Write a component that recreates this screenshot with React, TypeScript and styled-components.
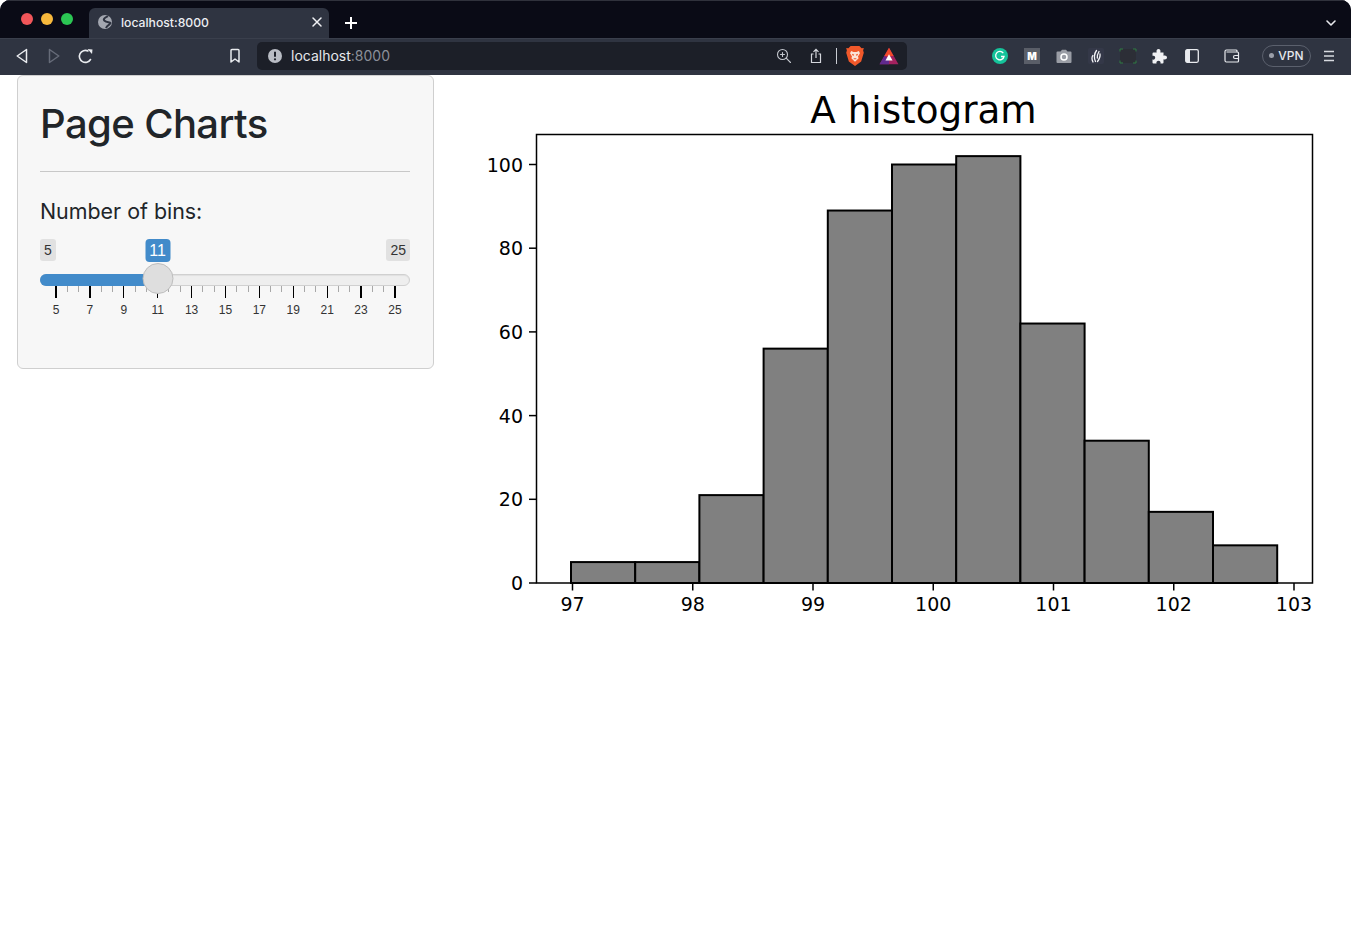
import React from 'react';
import styled, { createGlobalStyle } from 'styled-components';

const GlobalStyle = createGlobalStyle`
	html, body {
		margin: 0;
		padding: 0;
		background: #ffffff;
		font-family: Inter, 'Liberation Sans', sans-serif;
	}
	* {
		box-sizing: border-box;
	}
`;

const Header = styled.header`
	height: 75px;
	background: #2f3441;
	border-radius: 10px 10px 0 0;
	overflow: hidden;
`;

const TabStrip = styled.div`
	height: 38px;
	padding: 0 14px 0 21px;
	display: flex;
	align-items: flex-end;
	background: #0a0b16;
	border-top: 1px solid #30323c;
`;

const Lights = styled.div`
	display: flex;
	gap: 8px;
	margin-bottom: 13px;
	margin-right: 16px;
`;

const Light = styled.span<{ $color: string }>`
	width: 12px;
	height: 12px;
	border-radius: 50%;
	background: ${(p) => p.$color};
`;

const Tab = styled.div`
	width: 240px;
	height: 30px;
	padding: 0 4px 2px 8px;
	display: flex;
	align-items: center;
	gap: 8px;
	background: #2f3441;
	border-radius: 6px 6px 0 0;
	color: #eceef2;
	font-size: 12.2px;
	font-weight: 500;
`;

const TabTitle = styled.span`
	flex: 1;
`;

const NewTab = styled.div`
	width: 44px;
	height: 30px;
	display: flex;
	align-items: center;
	justify-content: center;
`;

const StripEnd = styled.div`
	margin-left: auto;
	height: 30px;
	display: flex;
	align-items: center;
`;

const Toolbar = styled.div`
	height: 37px;
	padding: 0 0 2px 6px;
	display: flex;
	align-items: center;
	box-shadow: inset 0 1px 0 #3a3f4c;
`;

const Slot = styled.div<{ $width?: number; $left?: number }>`
	width: ${(p) => p.$width ?? 32}px;
	height: 28px;
	margin-left: ${(p) => p.$left ?? 0}px;
	flex: none;
	display: flex;
	align-items: center;
	justify-content: center;
	color: #e9ebef;
`;

const AddressBar = styled.div`
	width: 650px;
	height: 28px;
	margin-left: 6px;
	padding: 0 1px 0 10px;
	display: flex;
	align-items: center;
	gap: 8px;
	flex: none;
	background: #1c1f28;
	border-radius: 5px;
	font-size: 14px;
	color: #e6e8ec;
`;

const Port = styled.span`
	color: #8b8f99;
`;

const AddressUrl = styled.span`
	flex: 1;
`;

const AddressActions = styled.div`
	display: flex;
	align-items: center;
`;

const Separator = styled.span`
	width: 1px;
	height: 16px;
	margin: 0 1px 0 4px;
	background: #c9ccd3;
`;

const Vpn = styled.div`
	width: 49px;
	height: 22px;
	margin-left: 14px;
	display: flex;
	align-items: center;
	justify-content: center;
	gap: 4px;
	flex: none;
	border: 1px solid #5b606d;
	border-radius: 11px;
	color: #e6e8ec;
	font-size: 12px;
	font-weight: 500;
`;

const VpnDot = styled.span`
	width: 5px;
	height: 5px;
	border-radius: 50%;
	background: #9a9ea8;
`;

const Main = styled.main`
	display: flex;
	align-items: flex-start;
`;

const Sidebar = styled.aside`
	width: 450px;
	padding: 0 16px 0 17px;
	flex: none;
`;

const Card = styled.section`
	height: 294px;
	padding: 0 23px 0 22px;
	background: #f7f7f7;
	border: 1px solid #cfcfcf;
	border-radius: 6px;
	color: #212529;
`;

const Title = styled.h2`
	margin: 0;
	padding-top: 23px;
	height: 96px;
	font-size: 40px;
	line-height: 50px;
	font-weight: 500;
	letter-spacing: -0.6px;
	border-bottom: 1px solid #c8c8c8;
`;

const BinsLabel = styled.label`
	display: block;
	margin-top: 26px;
	font-size: 21.4px;
	line-height: 26px;
`;

const Slider = styled.div`
	position: relative;
	margin-top: 15px;
	font-family: 'Liberation Sans', Arial, sans-serif;
`;

const Limits = styled.div`
	height: 22px;
	display: flex;
	justify-content: space-between;
	font-size: 14px;
`;

const Limit = styled.span`
	padding: 0 4px;
	min-width: 16px;
	display: flex;
	align-items: center;
	justify-content: center;
	background: #e1e1e1;
	border-radius: 3px;
	color: #333333;
`;

const ValueBadge = styled.span`
	position: absolute;
	top: 0;
	width: 25px;
	height: 23px;
	transform: translateX(-50%);
	display: flex;
	align-items: center;
	justify-content: center;
	background: #428bca;
	border-radius: 4px;
	color: #ffffff;
	font-size: 16px;
`;

const Track = styled.div`
	height: 12px;
	margin-top: 13px;
	background: #eeeeee;
	border: 1px solid #d0d0d0;
	border-radius: 6px;
	box-shadow: inset 0 1px 1px rgba(0, 0, 0, 0.06);
`;

const TrackFill = styled.div`
	height: 12px;
	margin: -1px 0 0 -1px;
	background: #428bca;
	border-radius: 6px 0 0 6px;
`;

const Thumb = styled.span`
	position: absolute;
	top: 24px;
	width: 31px;
	height: 31px;
	transform: translateX(-50%);
	background: #dedede;
	border: 1px solid #bdbdbd;
	border-radius: 50%;
`;

const Ticks = styled.div`
	height: 12px;
	margin: 0 14.5px 0 15.5px;
	display: flex;
	justify-content: space-between;
	align-items: flex-start;
`;

const Tick = styled.span<{ $major: boolean; $heavy: boolean }>`
	width: ${(p) => (p.$heavy ? 2 : 1)}px;
	margin: 0 ${(p) => (p.$heavy ? -0.5 : 0)}px;
	height: ${(p) => (p.$major ? 12 : 6)}px;
	background: ${(p) => (p.$major ? '#000000' : '#a8a8a8')};
`;

const TickLabels = styled.div`
	margin: 5px 15px 0 16px;
	display: flex;
	justify-content: space-between;
	font-size: 12px;
	line-height: 14px;
	color: #333333;
`;

const TickLabel = styled.span`
	width: 0;
	display: flex;
	justify-content: center;
`;

const ChartSvg = styled.svg`
	display: block;
	flex: none;
	width: 901px;
	height: 600px;

	text {
		font-family: 'DejaVu Sans', sans-serif;
		fill: #000000;
	}
`;

const counts = [5, 5, 21, 56, 89, 100, 102, 62, 34, 17, 9];
const binStart = 571;
const binWidth = 64.2;
const baseY = 583;
const unitY = 4.185;
const xTicks = [97, 98, 99, 100, 101, 102, 103];
const yTicks = [0, 20, 40, 60, 80, 100];
const xPos = (v: number) => 572.5 + (v - 97) * 120.25;

const Histogram = () => (
	<ChartSvg viewBox='450 75 901 600'>
		<text x='923.5' y='123' fontSize='37.3' textAnchor='middle'>
			A histogram
		</text>
		{counts.map((c, i) => (
			<rect
				key={i}
				x={binStart + i * binWidth}
				y={baseY - c * unitY}
				width={binWidth}
				height={c * unitY}
				fill='#808080'
				stroke='#000000'
				strokeWidth='2'
			/>
		))}
		<rect x='536.5' y='134.5' width='776' height='448.5' fill='none' stroke='#000000' strokeWidth='1.5' />
		{yTicks.map((t) => (
			<g key={t}>
				<line x1='529' x2='536.5' y1={baseY - t * unitY} y2={baseY - t * unitY} stroke='#000000' strokeWidth='1.5' />
				<text x='523' y={baseY - t * unitY + 7} fontSize='19' textAnchor='end'>
					{t}
				</text>
			</g>
		))}
		{xTicks.map((t) => (
			<g key={t}>
				<line x1={xPos(t)} x2={xPos(t)} y1='583' y2='590.5' stroke='#000000' strokeWidth='1.5' />
				<text x={xPos(t)} y='611' fontSize='19' textAnchor='middle'>
					{t}
				</text>
			</g>
		))}
	</ChartSvg>
);

const Globe = () => (
	<svg width='16' height='16' viewBox='0 0 16 16'>
		<circle cx='8' cy='8' r='7' fill='#a3a7b0' />
		<path d='M11 2.200C8.500 3.500 5.500 4.800 7.500 6.800s5.500 1 6 2.200-3.500 2-4.500 5' fill='none' stroke='#2f3441' strokeWidth='2' />
	</svg>
);

const CloseIcon = () => (
	<svg width='16' height='16' viewBox='0 0 16 16'>
		<path d='M4 4l8 8M12 4l-8 8' stroke='#f0f1f4' strokeWidth='1.5' strokeLinecap='round' />
	</svg>
);

const PlusIcon = () => (
	<svg width='14' height='14' viewBox='0 0 14 14'>
		<path d='M7 1v12M1 7h12' stroke='#ffffff' strokeWidth='2' />
	</svg>
);

const ChevronIcon = () => (
	<svg width='12' height='8' viewBox='0 0 12 8'>
		<path d='M2 2l4 4 4-4' fill='none' stroke='#e8e9ed' strokeWidth='1.6' strokeLinecap='round' strokeLinejoin='round' />
	</svg>
);

const BackIcon = ({ color = '#e9ebef', flip = false }: { color?: string; flip?: boolean }) => (
	<svg width='12' height='16' viewBox='0 0 12 16' style={flip ? { transform: 'scaleX(-1)' } : undefined}>
		<path d='M10.500 1.500v13L1.200 8z' fill='none' stroke={color} strokeWidth='1.500' strokeLinejoin='round' />
	</svg>
);

const ReloadIcon = () => (
	<svg width='16' height='16' viewBox='0 0 16 16'>
		<path d='M12.500 11.500A6 6 0 1 1 10 3' fill='none' stroke='#e9ebef' strokeWidth='1.600' strokeLinecap='round' />
		<path d='M9.500 1l5 .5-.5 4.500z' fill='#e9ebef' />
	</svg>
);

const BookmarkIcon = () => (
	<svg width='12' height='16' viewBox='0 0 12 16'>
		<path d='M2 2.500a1 1 0 0 1 1-1h6a1 1 0 0 1 1 1V14l-4-3-4 3z' fill='none' stroke='#e9ebef' strokeWidth='1.500' strokeLinejoin='round' />
	</svg>
);

const InfoIcon = () => (
	<svg width='16' height='16' viewBox='0 0 16 16'>
		<circle cx='8' cy='8' r='7' fill='#b9bcc4' />
		<path d='M8 3.800v5' stroke='#1c1f28' strokeWidth='2' />
		<circle cx='8' cy='11.300' r='1.100' fill='#1c1f28' />
	</svg>
);

const ZoomIcon = () => (
	<svg width='16' height='16' viewBox='0 0 16 16'>
		<circle cx='6.500' cy='6.500' r='5' fill='none' stroke='#c4c7ce' strokeWidth='1.100' />
		<path d='M4.500 6.500h4M6.500 4.500v4M10.200 10.200l4.300 4.300' stroke='#c4c7ce' strokeWidth='1.100' strokeLinecap='round' />
	</svg>
);

const ShareIcon = () => (
	<svg width='14' height='16' viewBox='0 0 14 16'>
		<path d='M4.500 6H2.500v8.500h9V6H9.500M7 10V1.500M4.500 3.800 7 1.300l2.500 2.500' fill='none' stroke='#d4d6dc' strokeWidth='1.200' />
	</svg>
);

const BraveIcon = () => (
	<svg width='20' height='22' viewBox='0 0 18 20'>
		<path d='M5 1h8l2 2 2-.3-.6 2.300.6 2-2.400 8L9 19l-5.600-4L1 7l.6-2L1 2.700 3 3z' fill='#f0582a' />
		<path d='M5.500 5.500l2.200.8h2.600l2.200-.8 1 2-1.800 3 .6 1.500L10 14.300 9 15.200 8 14.300 5.700 12l.6-1.500-1.800-3z' fill='#fbe3d8' />
		<path d='M6.500 8.500l1.500.8M11.500 8.500l-1.500.8M7.800 12.500h2.400' stroke='#f0582a' strokeWidth='1.100' />
	</svg>
);

const BatIcon = () => (
	<svg width='20' height='18' viewBox='0 0 18 16'>
		<path d='M9 .5l8.500 15H.5z' fill='#a3215f' />
		<path d='M9 .5l4.200 7.400H4.800z' fill='#f2492a' />
		<path d='M.5 15.500l4.300-7.600L9 11.500v4z' fill='#5f2a8e' />
		<path d='M5.800 12 9 6.400l3.200 5.600z' fill='#ffffff' />
	</svg>
);

const GrammarlyIcon = () => (
	<svg width='16' height='16' viewBox='0 0 16 16'>
		<circle cx='8' cy='8' r='8' fill='#15c39a' />
		<path d='M11.300 5.200A4.200 4.200 0 1 0 12 8.500H9' fill='none' stroke='#ffffff' strokeWidth='1.300' />
	</svg>
);

const MailTile = () => (
	<svg width='16' height='16' viewBox='0 0 16 16'>
		<rect width='16' height='16' fill='#5a5e68' />
		<text x='8' y='11.500' fontSize='10' fontWeight='900' textAnchor='middle' fill='#ffffff' fontFamily='Inter, sans-serif'>
			M
		</text>
	</svg>
);

const CameraIcon = () => (
	<svg width='16' height='14' viewBox='0 0 16 14'>
		<path d='M1.500 2.500h3L6 .8h4l1.500 1.700h3a1 1 0 0 1 1 1V13a1 1 0 0 1-1 1h-13a1 1 0 0 1-1-1V3.500a1 1 0 0 1 1-1z' fill='#9a9da5' />
		<circle cx='8' cy='8' r='3' fill='none' stroke='#ffffff' strokeWidth='1.500' />
	</svg>
);

const FlameIcon = () => (
	<svg width='16' height='16' viewBox='0 0 16 16'>
		<rect width='16' height='16' rx='2' fill='#343848' />
		<path d='M4.800 7.500C3.500 9.500 4 12 5 14M8.500 2.500C6 6 6 10 7.500 13.500M12 6c.5 3-1 5.500-2.500 7.500M11 3.500C9.500 6 9 8 9.300 10' fill='none' stroke='#f2f3f6' strokeWidth='1.300' strokeLinecap='round' />
	</svg>
);

const FrameIcon = () => (
	<svg width='18' height='16' viewBox='0 0 18 16'>
		<rect x='1' y='1' width='16' height='14' fill='#2c2e36' />
		<path d='M1 3.500V1h3M14 1h3v2.500M17 12.500V15h-3M4 15H1v-2.500' fill='none' stroke='#2f7a43' strokeWidth='1' />
	</svg>
);

const PuzzleIcon = () => (
	<svg width='16' height='16' viewBox='0 0 16 16'>
		<path d='M1.500 4.500h3.200C4 2.500 5 1 6.500 1S9 2.500 8.300 4.500h3.200v3.200c1.800-.7 3.500.3 3.500 1.800s-1.700 2.500-3.500 1.800v3.200a1 1 0 0 1-1 1H8.500c.4-1.700-.6-2.700-2-2.700s-2.400 1-2 2.700h-3a1 1 0 0 1-1-1v-3c1.700.5 2.700-.5 2.700-1.900S2.200 7.300.5 7.800V5.500a1 1 0 0 1 1-1z' fill='#f0f1f4' />
	</svg>
);

const SidebarIcon = () => (
	<svg width='14' height='14' viewBox='0 0 14 14'>
		<rect x='.7' y='.7' width='12.600' height='12.600' rx='1.500' fill='none' stroke='#e9ebef' strokeWidth='1.300' />
		<rect x='1' y='1' width='4' height='12' fill='#e9ebef' />
	</svg>
);

const WalletIcon = () => (
	<svg width='16' height='14' viewBox='0 0 16 14'>
		<path d='M13 3V2a1 1 0 0 0-1-1H2.500A1.500 1.500 0 0 0 1 2.500V11.500A1.500 1.500 0 0 0 2.500 13h11a1 1 0 0 0 1-1V4a1 1 0 0 0-1-1H2.500' fill='none' stroke='#e9ebef' strokeWidth='1.200' />
		<path d='M15 6.500h-4a1.500 1.500 0 0 0 0 3h4' fill='none' stroke='#e9ebef' strokeWidth='1.200' />
	</svg>
);

const MenuIcon = () => (
	<svg width='12' height='12' viewBox='0 0 12 12'>
		<path d='M1 1.500h10M1 6h10M1 10.500h10' stroke='#d8dae0' strokeWidth='1.500' />
	</svg>
);

const sliderMin = 5;
const sliderMax = 25;
const sliderValue = 11;
const valueLeft = 15.7 + ((sliderValue - sliderMin) / (sliderMax - sliderMin)) * 339.4;
const tickCount = 31;
const labels = [5, 7, 9, 11, 13, 15, 17, 19, 21, 23, 25];

const App = (): React.FunctionComponentElement<JSX.Element> => {
	return (
		<>
			<GlobalStyle />
			<Header>
				<TabStrip>
					<Lights>
						<Light $color='#f1565a' />
						<Light $color='#f8b93c' />
						<Light $color='#2bc653' />
					</Lights>
					<Tab>
						<Globe />
						<TabTitle>localhost:8000</TabTitle>
						<CloseIcon />
					</Tab>
					<NewTab>
						<PlusIcon />
					</NewTab>
					<StripEnd>
						<ChevronIcon />
					</StripEnd>
				</TabStrip>
				<Toolbar>
					<Slot>
						<BackIcon />
					</Slot>
					<Slot>
						<BackIcon color='#666b78' flip />
					</Slot>
					<Slot>
						<ReloadIcon />
					</Slot>
					<Slot $left={117}>
						<BookmarkIcon />
					</Slot>
					<AddressBar>
						<InfoIcon />
						<AddressUrl>
							localhost<Port>:8000</Port>
						</AddressUrl>
						<AddressActions>
							<Slot>
								<ZoomIcon />
							</Slot>
							<Slot>
								<ShareIcon />
							</Slot>
							<Separator />
							<Slot $width={34}>
								<BraveIcon />
							</Slot>
							<Slot $width={34}>
								<BatIcon />
							</Slot>
						</AddressActions>
					</AddressBar>
					<Slot $left={77}>
						<GrammarlyIcon />
					</Slot>
					<Slot>
						<MailTile />
					</Slot>
					<Slot>
						<CameraIcon />
					</Slot>
					<Slot>
						<FlameIcon />
					</Slot>
					<Slot>
						<FrameIcon />
					</Slot>
					<Slot>
						<PuzzleIcon />
					</Slot>
					<Slot>
						<SidebarIcon />
					</Slot>
					<Slot $left={8}>
						<WalletIcon />
					</Slot>
					<Vpn>
						<VpnDot />
						VPN
					</Vpn>
					<Slot $left={2}>
						<MenuIcon />
					</Slot>
				</Toolbar>
			</Header>
			<Main>
				<Sidebar>
					<Card>
						<Title>Page Charts</Title>
						<BinsLabel>Number of bins:</BinsLabel>
						<Slider>
							<Limits>
								<Limit>{sliderMin}</Limit>
								<Limit>{sliderMax}</Limit>
							</Limits>
							<ValueBadge style={{ left: valueLeft }}>{sliderValue}</ValueBadge>
							<Track>
								<TrackFill style={{ width: valueLeft }} />
							</Track>
							<Thumb style={{ left: valueLeft }} />
							<Ticks>
								{Array.from({ length: tickCount }, (_, i) => (
									<Tick key={i} $major={i % 3 === 0} $heavy={i % 3 === 0 && (i < 4 || i > 26)} />
								))}
							</Ticks>
							<TickLabels>
								{labels.map((l) => (
									<TickLabel key={l}>{l}</TickLabel>
								))}
							</TickLabels>
						</Slider>
					</Card>
				</Sidebar>
				<Histogram />
			</Main>
		</>
	);
};

export default App;
